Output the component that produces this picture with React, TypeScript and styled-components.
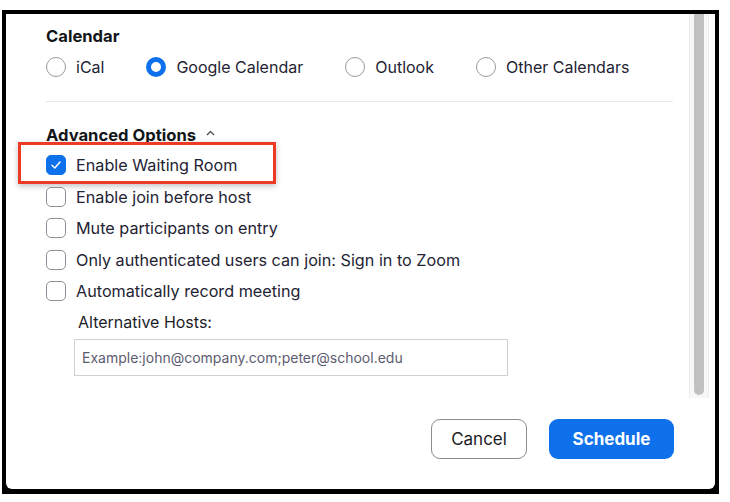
import React, { useState } from 'react';
import styled, { createGlobalStyle } from 'styled-components';

const GlobalStyle = createGlobalStyle`
  html, body {
    margin: 0;
    padding: 0;
    background: #ffffff;
  }
  body {
    font-family: 'Inter', 'Liberation Sans', sans-serif;
    color: #232333;
  }
`;

const calendars = ['iCal', 'Google Calendar', 'Outlook', 'Other Calendars'];

const options = [
  'Enable Waiting Room',
  'Enable join before host',
  'Mute participants on entry',
  'Only authenticated users can join: Sign in to Zoom',
  'Automatically record meeting',
];

const App: React.FC = () => {
  const [calendar, setCalendar] = useState('Google Calendar');
  const [checked, setChecked] = useState<string[]>(['Enable Waiting Room']);

  const toggle = (name: string) => {
    setChecked((prev) =>
      prev.includes(name) ? prev.filter((n) => n !== name) : [...prev, name]
    );
  };

  return (
    <>
      <GlobalStyle />
      <Frame>
        <Window>
          <Body>
            <Content>
              <Heading>Calendar</Heading>
              <RadioRow>
                {calendars.map((c) => (
                  <RadioItem key={c} onClick={() => setCalendar(c)}>
                    <Radio $on={calendar === c} />
                    <span>{c}</span>
                  </RadioItem>
                ))}
              </RadioRow>
              <Divider />
              <AdvancedHeading>
                Advanced Options
                <svg width="9" height="6" viewBox="0 0 9 6">
                  <path d="M1 5 L4.5 1.5 L8 5" fill="none" stroke="#555" strokeWidth="1.4" />
                </svg>
              </AdvancedHeading>
              <OptionList>
                {options.map((o, i) => (
                  <OptionRow key={o} onClick={() => toggle(o)}>
                    <Checkbox $on={checked.includes(o)}>
                      {checked.includes(o) && (
                        <svg width="12" height="10" viewBox="0 0 12 10">
                          <path d="M2 5.2 L4.8 8 L10 2" fill="none" stroke="#fff" strokeWidth="1.5" strokeLinecap="round" strokeLinejoin="round" />
                        </svg>
                      )}
                    </Checkbox>
                    <span>{o}</span>
                    {i === 0 && <Highlight />}
                  </OptionRow>
                ))}
              </OptionList>
              <HostSection>
                <HostLabel>Alternative Hosts:</HostLabel>
                <HostInput placeholder="Example:john@company.com;peter@school.edu" />
              </HostSection>
            </Content>
            <ScrollTrack>
              <ScrollThumb />
            </ScrollTrack>
          </Body>
          <Footer>
            <CancelButton>Cancel</CancelButton>
            <ScheduleButton>Schedule</ScheduleButton>
          </Footer>
        </Window>
      </Frame>
    </>
  );
};

export default App;

const Frame = styled.div`
  box-sizing: border-box;
  margin: 10px 0 0 2px;
  width: 717px;
  height: 484px;
  padding: 4px 4px 5px 4px;
  background: #000;
`;

const Window = styled.div`
  height: 100%;
  background: #fff;
  border-radius: 0 0 6px 6px;
  display: flex;
  flex-direction: column;
`;

const Body = styled.div`
  height: 384px;
  display: flex;
`;

const Content = styled.div`
  flex: 1;
  padding: 12px 16px 0 40px;
`;

const Heading = styled.div`
  font-size: 16.6px;
  font-weight: 700;
  line-height: 20px;
  color: #131619;
`;

const RadioRow = styled.div`
  margin-top: 11px;
  display: flex;
  gap: 42px;
`;

const RadioItem = styled.label`
  display: flex;
  align-items: center;
  gap: 10px;
  font-size: 16px;
  line-height: 20px;
  cursor: pointer;
`;

const Radio = styled.span<{ $on: boolean }>`
  box-sizing: border-box;
  width: 20px;
  height: 20px;
  border-radius: 50%;
  background: #fff;
  border: ${(p) => (p.$on ? '5.5px solid #0e71eb' : '1px solid #9a9a9a')};
`;

const Divider = styled.div`
  margin-top: 24px;
  height: 1px;
  background: #e6e7ee;
`;

const AdvancedHeading = styled(Heading)`
  margin-top: 23px;
  display: flex;
  align-items: center;
  gap: 10px;

  svg {
    margin-top: -4px;
  }
`;

const OptionList = styled.div`
  margin-top: 10px;
  display: flex;
  flex-direction: column;
  gap: 11.5px;
`;

const OptionRow = styled.label`
  position: relative;
  display: flex;
  align-items: center;
  gap: 10px;
  font-size: 16.2px;
  line-height: 20px;
  cursor: pointer;
`;

const Checkbox = styled.span<{ $on: boolean }>`
  box-sizing: border-box;
  width: 20px;
  height: 20px;
  border-radius: 5px;
  display: flex;
  align-items: center;
  justify-content: center;
  background: ${(p) => (p.$on ? '#0e71eb' : '#fff')};
  border: 1px solid ${(p) => (p.$on ? '#0e71eb' : '#8f8f99')};
`;

const Highlight = styled.span`
  position: absolute;
  left: -28px;
  top: -13px;
  width: 258px;
  height: 42px;
  box-sizing: border-box;
  border: 3px solid #ec3a24;
  box-shadow: 0 2px 6px rgba(0, 0, 0, 0.25);
  pointer-events: none;
`;

const HostSection = styled.div`
  margin-top: 11px;
  padding-left: 28px;
`;

const HostLabel = styled.div`
  padding-left: 4px;
  font-size: 16px;
  line-height: 20px;
  color: #1d1d28;
`;

const HostInput = styled.input`
  display: block;
  box-sizing: border-box;
  margin-top: 7px;
  width: 434px;
  height: 37px;
  padding: 0 7px;
  border: 1px solid #cfcfd4;
  border-radius: 0;
  font-family: 'Inter', 'Liberation Sans', sans-serif;
  font-size: 14px;
  outline: none;

  &::placeholder {
    color: #5c5c70;
  }
`;

const ScrollTrack = styled.div`
  box-sizing: border-box;
  width: 20px;
  margin-right: 6px;
  padding: 0 4px 3px 4px;
  background: #f7f7f7;
  border-left: 1px solid #ececec;
  border-right: 1px solid #ececec;
  display: flex;
`;

const ScrollThumb = styled.div`
  flex: 1;
  background: #c1c1c1;
  border-radius: 0 0 5px 5px;
`;

const Footer = styled.div`
  display: flex;
  justify-content: flex-end;
  gap: 22px;
  padding: 21px 41px 0 0;
`;

const BaseButton = styled.button`
  box-sizing: border-box;
  height: 40px;
  border-radius: 9px;
  font-family: 'Inter', 'Liberation Sans', sans-serif;
  font-size: 17px;
  cursor: pointer;
`;

const CancelButton = styled(BaseButton)`
  width: 96px;
  background: #fff;
  border: 1px solid #8c8c8c;
  color: #1c1c24;
`;

const ScheduleButton = styled(BaseButton)`
  width: 125px;
  background: #0e71eb;
  border: none;
  color: #fff;
  font-weight: 700;
`;
